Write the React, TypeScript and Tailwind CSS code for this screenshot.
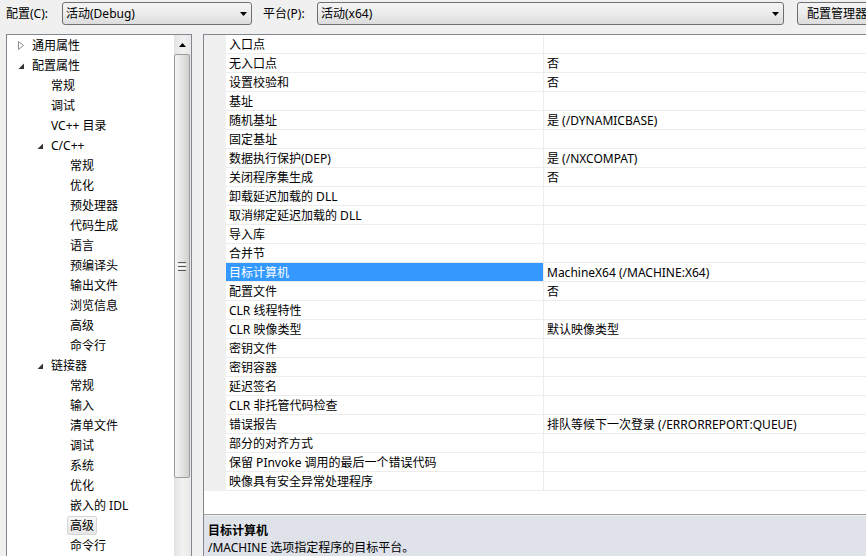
import React from "react";

type TreeItem = { label: string; level: number; arrow?: "open" | "closed"; selected?: boolean };

const tree: TreeItem[] = [
  { label: "通用属性", level: 0, arrow: "closed" },
  { label: "配置属性", level: 0, arrow: "open" },
  { label: "常规", level: 1 },
  { label: "调试", level: 1 },
  { label: "VC++ 目录", level: 1 },
  { label: "C/C++", level: 1, arrow: "open" },
  { label: "常规", level: 2 },
  { label: "优化", level: 2 },
  { label: "预处理器", level: 2 },
  { label: "代码生成", level: 2 },
  { label: "语言", level: 2 },
  { label: "预编译头", level: 2 },
  { label: "输出文件", level: 2 },
  { label: "浏览信息", level: 2 },
  { label: "高级", level: 2 },
  { label: "命令行", level: 2 },
  { label: "链接器", level: 1, arrow: "open" },
  { label: "常规", level: 2 },
  { label: "输入", level: 2 },
  { label: "清单文件", level: 2 },
  { label: "调试", level: 2 },
  { label: "系统", level: 2 },
  { label: "优化", level: 2 },
  { label: "嵌入的 IDL", level: 2 },
  { label: "高级", level: 2, selected: true },
  { label: "命令行", level: 2 },
];

const rows: [string, string][] = [
  ["入口点", ""],
  ["无入口点", "否"],
  ["设置校验和", "否"],
  ["基址", ""],
  ["随机基址", "是 (/DYNAMICBASE)"],
  ["固定基址", ""],
  ["数据执行保护(DEP)", "是 (/NXCOMPAT)"],
  ["关闭程序集生成", "否"],
  ["卸载延迟加载的 DLL", ""],
  ["取消绑定延迟加载的 DLL", ""],
  ["导入库", ""],
  ["合并节", ""],
  ["目标计算机", "MachineX64 (/MACHINE:X64)"],
  ["配置文件", "否"],
  ["CLR 线程特性", ""],
  ["CLR 映像类型", "默认映像类型"],
  ["密钥文件", ""],
  ["密钥容器", ""],
  ["延迟签名", ""],
  ["CLR 非托管代码检查", ""],
  ["错误报告", "排队等候下一次登录 (/ERRORREPORT:QUEUE)"],
  ["部分的对齐方式", ""],
  ["保留 PInvoke 调用的最后一个错误代码", ""],
  ["映像具有安全异常处理程序", ""],
];

function DropArrow() {
  return (
    <svg width="7" height="4" viewBox="0 0 7 4" className="shrink-0">
      <path d="M0 0H7L3.5 4Z" fill="#000" />
    </svg>
  );
}

function Combo({ text, w }: { text: string; w: string }) {
  return (
    <div
      className={`${w} h-[23px] shrink-0 rounded-[3px] border border-[#707070] bg-gradient-to-b from-[#f4f4f4] via-[#ebebeb] to-[#dcdcdc] flex items-center pl-[3px] pr-[4px]`}
    >
      <span className="flex-1 text-[12px] leading-[16px] pt-[1px] text-black whitespace-nowrap">{text}</span>
      <DropArrow />
    </div>
  );
}

function Arrow({ kind }: { kind?: "open" | "closed" }) {
  if (kind === "closed")
    return (
      <svg width="7" height="9" viewBox="0 0 7 9" className="ml-[5px]">
        <path d="M0.5 0.5L5.5 4.5L0.5 8.5Z" fill="none" stroke="#8c8c8c" strokeWidth="1" />
      </svg>
    );
  if (kind === "open")
    return (
      <svg width="7" height="7" viewBox="0 0 7 7" className="ml-[5px] mt-[2px]">
        <path d="M6 0.5V6H0.5Z" fill="#333" />
      </svg>
    );
  return null;
}

export default function App() {
  return (
    <div className="w-[866px] h-[556px] overflow-hidden bg-[#f0f0f0] flex flex-col font-['Noto_Sans','Noto_Sans_CJK_SC',sans-serif] text-[12px] text-black">
      {/* top bar */}
      <div className="h-[34px] shrink-0 flex items-start pt-[2px] pl-[6px] overflow-hidden">
        <div className="w-[56px] h-[23px] shrink-0 flex items-center pt-[1px] whitespace-nowrap">配置(C):</div>
        <Combo text="活动(Debug)" w="w-[190px]" />
        <div className="ml-[11px] w-[54px] h-[23px] shrink-0 flex items-center pt-[1px] whitespace-nowrap">平台(P):</div>
        <Combo text="活动(x64)" w="w-[467px]" />
        <div className="ml-[13px] w-[90px] h-[23px] shrink-0 rounded-[3px] border border-[#707070] bg-gradient-to-b from-[#f4f4f4] via-[#ebebeb] to-[#dcdcdc] flex items-center pl-[9px] pt-[1px] whitespace-nowrap">
          配置管理器...
        </div>
      </div>

      {/* main */}
      <div className="flex-1 flex min-h-0">
        {/* tree */}
        <div className="ml-[6px] w-[186px] h-[560px] shrink-0 border border-[#828790] bg-white flex">
          <div className="flex-1 overflow-hidden">
            {tree.map((t, i) => (
              <div
                key={i}
                className="h-[20px] flex items-center whitespace-nowrap"
                style={{ paddingLeft: 6 + 19 * t.level }}
              >
                <div className="w-[19px] shrink-0 flex items-center pt-[1px]">
                  <Arrow kind={t.arrow} />
                </div>
                <span
                  className={
                    t.selected
                      ? "-ml-[3px] px-[2px] h-[19px] mt-[1px] pt-[1px] flex items-center rounded-[2px] border border-[#d6d6d6] bg-gradient-to-b from-[#f8f8f8] to-[#e6e6e6]"
                      : "-ml-[3px] px-[2px] h-[19px] mt-[1px] pt-[1px] flex items-center border border-transparent"
                  }
                >
                  {t.label}
                </span>
              </div>
            ))}
          </div>
          {/* scrollbar */}
          <div className="w-[17px] shrink-0 bg-gradient-to-r from-[#e3e3e3] via-[#f1f1f1] to-[#e8e8e8] flex flex-col">
            <div className="h-[19px] flex items-center justify-center">
              <svg width="7" height="4" viewBox="0 0 7 4">
                <path d="M3.5 0L7 4H0Z" fill="#000" />
              </svg>
            </div>
            <div className="w-[16px] h-[424px] rounded-[2px] border border-[#9b9b9b] bg-gradient-to-r from-[#f4f4f4] via-[#e4e4e4] to-[#cfcfcf] flex items-center justify-center">
              <div className="flex flex-col gap-[1px]">
                <div className="w-[8px] h-[1px] bg-[#5a5a5a]" />
                <div className="w-[8px] h-[1px] bg-[#ffffff]" />
                <div className="w-[8px] h-[1px] bg-[#5a5a5a]" />
                <div className="w-[8px] h-[1px] bg-[#ffffff]" />
                <div className="w-[8px] h-[1px] bg-[#5a5a5a]" />
              </div>
            </div>
          </div>
        </div>

        {/* property panel */}
        <div className="ml-[11px] flex-1 min-w-0 border-l border-t border-[#828790] flex flex-col">
          <div className="h-[480px] shrink-0 bg-white border-b border-[#a0a0a0]">
            {rows.map(([name, value], i) => {
              const sel = name === "目标计算机";
              return (
                <div key={i} className="h-[19px] flex">
                  <div className="w-[22px] shrink-0 bg-[#f0f0f0]" />
                  <div
                    className={`w-[318px] shrink-0 border-b border-r border-[#ececec] pl-[3px] pt-[2px] flex items-center whitespace-nowrap ${
                      sel ? "bg-[#3399ff] text-white" : ""
                    }`}
                  >
                    {name}
                  </div>
                  <div className="flex-1 border-b border-[#ececec] pl-[3px] pt-[2px] flex items-center whitespace-nowrap">
                    {value}
                  </div>
                </div>
              );
            })}
          </div>
          <div className="flex-1 bg-[#dfe2e9] border-t border-[#f0f0f0] pl-[4px] pt-[6px] leading-[17px] whitespace-nowrap">
            <div className="font-bold">目标计算机</div>
            <div>/MACHINE 选项指定程序的目标平台。</div>
          </div>
        </div>
      </div>
    </div>
  );
}
